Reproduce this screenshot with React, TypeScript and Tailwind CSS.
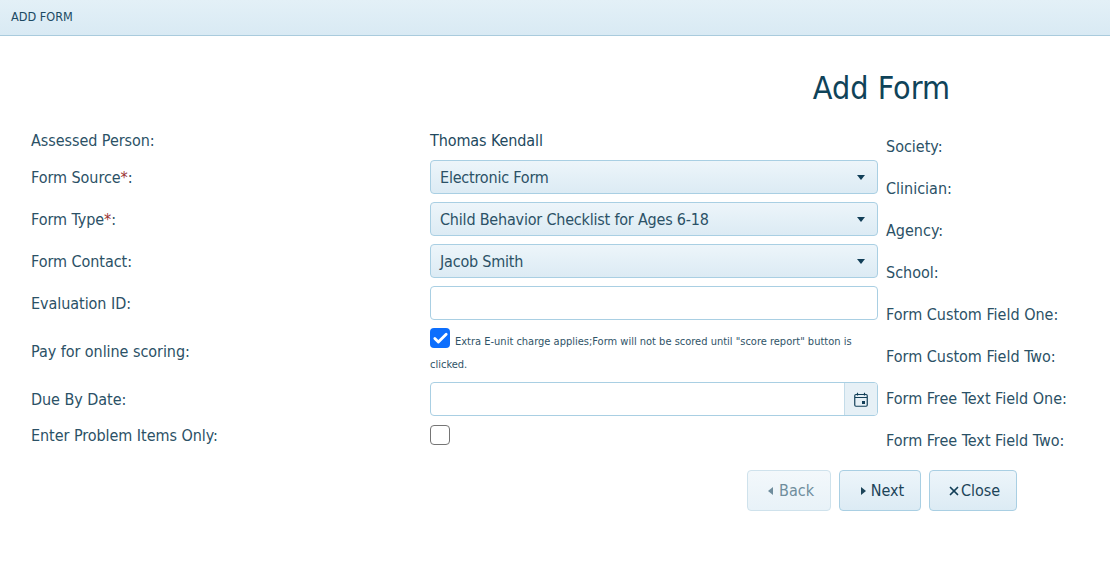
import { Check, X } from "lucide-react";

const font = { fontFamily: '"DejaVu Sans", sans-serif', fontStretch: "condensed" };
const RIGHT_FIELDS = [
  "Society:",
  "Clinician:",
  "Agency:",
  "School:",
  "Form Custom Field One:",
  "Form Custom Field Two:",
  "Form Free Text Field One:",
  "Form Free Text Field Two:",
];

function Row({ label, required, className, children }: { label: string; required?: boolean; className: string; children: React.ReactNode }) {
  return (
    <div className={`flex items-center ${className}`}>
      <div className="w-[399px] shrink-0 pt-[2px] tracking-[-0.05px]">
        {label}
        {required && <span className="text-[#9a3434]">*</span>}
        {required && ":"}
      </div>
      <div className="w-[448px] shrink-0">{children}</div>
    </div>
  );
}

function Select({ value }: { value: string }) {
  return (
    <div className="flex h-[34px] items-center justify-between rounded-[4px] border border-[#a9cfe3] bg-gradient-to-b from-[#edf5fa] to-[#dcebf4] pl-[9px] pr-[12px]">
      <span className="pt-[2px] tracking-[-0.2px]">{value}</span>
      <span className="h-0 w-0 border-x-[4px] border-t-[5px] border-x-transparent border-t-[#123f58]" />
    </div>
  );
}

function Button({ disabled, children, className }: { disabled?: boolean; children: React.ReactNode; className: string }) {
  return (
    <div
      className={`flex h-[41px] items-center justify-center rounded-[4px] border bg-gradient-to-b ${className} ${
        disabled ? "border-[#cfe2ec] from-[#f3f8fb] to-[#e8f2f8] text-[#6f8d9d]" : "border-[#a9cfe3] from-[#edf5fa] to-[#dcebf4] text-[#1c4459]"
      }`}
    >
      {children}
    </div>
  );
}

export default function App() {
  return (
    <div className="h-[563px] w-[1110px] overflow-hidden bg-white text-[16px] text-[#2b5166]" style={font}>
      <div className="flex h-[36px] items-center border-b border-[#a9cbdd] bg-gradient-to-b from-[#e3f0f7] to-[#d9eaf4] pl-[11px] text-[12.6px] text-[#1c4a63]">
        ADD FORM
      </div>
      <div className="flex h-[92px] items-center justify-end pr-[160px] pt-[12px] text-[32px] text-[#0f4359]">Add Form</div>

      <div className="flex pl-[31px]">
        <div className="w-[855px] shrink-0">
          <Row label="Assessed Person:" className="h-[24px]">
            <span className="block pt-[2px] tracking-[-0.1px] text-[#22495e]">Thomas Kendall</span>
          </Row>
          <div className="mt-[8px] flex flex-col gap-[8px]">
            <Row label="Form Source" required className="h-[34px]">
              <Select value="Electronic Form" />
            </Row>
            <Row label="Form Type" required className="h-[34px]">
              <Select value="Child Behavior Checklist for Ages 6-18" />
            </Row>
            <Row label="Form Contact:" className="h-[34px]">
              <Select value="Jacob Smith" />
            </Row>
            <Row label="Evaluation ID:" className="h-[34px]">
              <div className="h-[34px] rounded-[4px] border border-[#a9cfe3] bg-white" />
            </Row>
            <Row label="Pay for online scoring:" className="h-[46px]">
              <div className="pt-[4px] text-[11px] leading-[23px] text-[#2f5367]">
                <span className="-mt-[2px] mr-[5px] inline-flex h-[20px] w-[20px] items-center justify-center rounded-[4px] bg-[#0d6efd] align-top">
                  <Check size={17} strokeWidth={4} className="text-white" />
                </span>
                Extra E-unit charge applies;Form will not be scored until "score report" button is clicked.
              </div>
            </Row>
            <Row label="Due By Date:" className="h-[34px]">
              <div className="flex h-[34px] items-stretch justify-between overflow-hidden rounded-[4px] border border-[#a9cfe3] bg-white">
                <div />
                <div className="flex w-[33px] items-center justify-center border-l border-[#c4dce9] bg-[#e6f0f6]">
                  <svg width="14" height="15" viewBox="0 0 14 15" fill="none" stroke="#123f58">
                    <rect x="0.75" y="2.5" width="12.5" height="11.75" rx="1.2" strokeWidth="1.2" />
                    <path d="M1 5.5h12M3.5 0.8v2.6M10.5 0.8v2.6" strokeWidth="1.2" />
                    <rect x="8" y="9" width="3" height="3" fill="#123f58" stroke="none" />
                  </svg>
                </div>
              </div>
            </Row>
            <Row label="Enter Problem Items Only:" className="h-[22px]">
              <span className="block h-[20px] w-[20px] rounded-[4px] border-[1.5px] border-[#757575] bg-white" />
            </Row>
          </div>
        </div>
        <div className="flex flex-col gap-[18px] pt-[7px]">
          {RIGHT_FIELDS.map((f) => (
            <div key={f} className="h-[24px] whitespace-nowrap">
              {f}
            </div>
          ))}
        </div>
      </div>

      <div className="mt-[17px] flex justify-end gap-[8px] pr-[93px]">
        <Button disabled className="w-[84px] gap-[6px] pl-[4px]">
          <span className="h-0 w-0 border-y-[4px] border-r-[5px] border-y-transparent border-r-[#6f8d9d]" />
          Back
        </Button>
        <Button className="w-[82px] gap-[5px] pl-[5px]">
          <span className="h-0 w-0 border-y-[4px] border-l-[5px] border-y-transparent border-l-[#1c4459]" />
          Next
        </Button>
        <Button className="w-[88px] pl-[1px]">
          <X size={14} strokeWidth={3} className="text-[#123f58]" />
          Close
        </Button>
      </div>
    </div>
  );
}
